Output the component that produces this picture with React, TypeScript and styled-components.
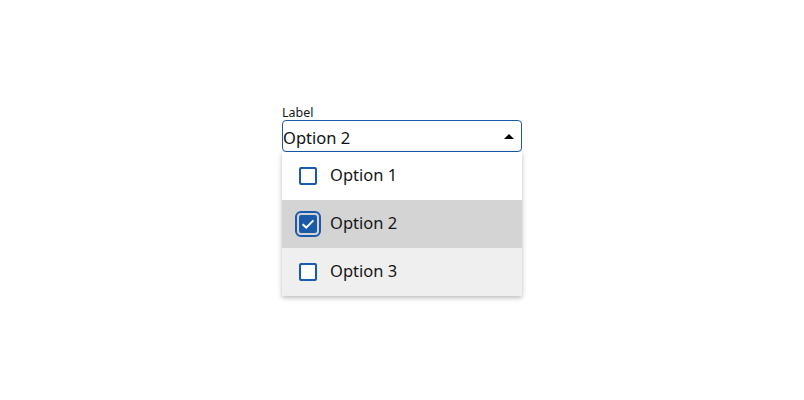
import React from "react";
import styled, { createGlobalStyle } from "styled-components";

const Global = createGlobalStyle`
  html, body { margin: 0; padding: 0; background: #fff; }
  body { font-family: "Noto Sans", "Open Sans", sans-serif; color: #161616; }
`;

const Page = styled.div`
  width: 804px;
  height: 400px;
  display: flex;
  justify-content: center;
  padding-top: 106px;
  box-sizing: border-box;
`;

const Field = styled.div`
  width: 240px;
  display: flex;
  flex-direction: column;
`;

const Label = styled.label`
  font-size: 12.5px;
  line-height: 14px;
  color: #161616;
`;

const Input = styled.div`
  height: 32px;
  box-sizing: border-box;
  border: 1px solid #1a5aa8;
  border-radius: 4px;
  display: flex;
  align-items: center;
  justify-content: space-between;
  padding: 2px 6px 0 0;
  font-size: 16.5px;
  color: #111;
`;

const Arrow = styled.span`
  width: 0;
  height: 0;
  border-left: 5px solid transparent;
  border-right: 5px solid transparent;
  border-bottom: 5px solid #000;
  margin: -2px 1px 0 0;
`;

const Menu = styled.ul`
  list-style: none;
  margin: 0;
  padding: 0;
  background: #fff;
  box-shadow: 0 2px 4px rgba(0, 0, 0, 0.2), 0 1px 8px rgba(0, 0, 0, 0.08);
`;

const Item = styled.li<{ $bg: string }>`
  height: 48px;
  display: flex;
  align-items: center;
  gap: 13px;
  padding-left: 17px;
  background: ${(p) => p.$bg};
  font-size: 16.5px;
  color: #161616;
`;

const Text = styled.span`
  margin-top: -4px;
`;

const Box = styled.span<{ $checked: boolean }>`
  width: 18px;
  height: 18px;
  box-sizing: border-box;
  border: 2px solid #1a5aa8;
  border-radius: 2px;
  background: ${(p) => (p.$checked ? "#1a5aa8" : "#fff")};
  display: flex;
  align-items: center;
  justify-content: center;
  outline: ${(p) => (p.$checked ? "2px solid #1a5aa8" : "none")};
  outline-offset: 2px;
`;

const options = [
  { label: "Option 1", checked: false, bg: "#ffffff" },
  { label: "Option 2", checked: true, bg: "#d4d4d4" },
  { label: "Option 3", checked: false, bg: "#efefef" },
];

export default function App() {
  return (
    <>
      <Global />
      <Page>
        <Field>
          <Label>Label</Label>
          <Input>
            <span>Option 2</span>
            <Arrow />
          </Input>
          <Menu>
            {options.map((o) => (
              <Item key={o.label} $bg={o.bg}>
                <Box $checked={o.checked}>
                  {o.checked && (
                    <svg width="14" height="14" viewBox="0 0 14 14">
                      <path d="M1.6 7.2 L5.2 10.6 L12.4 3.4" fill="none" stroke="#fff" strokeWidth="2" />
                    </svg>
                  )}
                </Box>
                <Text>{o.label}</Text>
              </Item>
            ))}
          </Menu>
        </Field>
      </Page>
    </>
  );
}
